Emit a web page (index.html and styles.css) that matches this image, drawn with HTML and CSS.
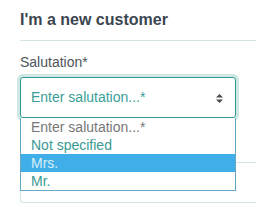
FILE: index.html
```html
<!DOCTYPE html>
<html>
<head>
<meta charset="utf-8">
<link rel="stylesheet" href="styles.css">
</head>
<body>
<div class="page">
  <h2 class="title">I'm a new customer</h2>
  <div class="divider"></div>
  <label class="label">Salutation*</label>
  <div class="select-wrap">
    <div class="select">
      <span class="select-text">Enter salutation...*</span>
      <svg class="arrows" width="7" height="9" viewBox="0 0 7 9"><path d="M3.5 0 L7 3.6 L0 3.6 Z M3.5 9 L7 5.4 L0 5.4 Z" fill="#4a4a4a"/></svg>
    </div>
    <ul class="options">
      <li class="opt placeholder">Enter salutation...*</li>
      <li class="opt">Not specified</li>
      <li class="opt active">Mrs.</li>
      <li class="opt">Mr.</li>
    </ul>
  </div>
  <div class="card"></div>
</div>
</body>
</html>
```
FILE: styles.css
```css
html, body {
  margin: 0;
  padding: 0;
  background: #ffffff;
  overflow: hidden;
}
.page {
  padding-left: 20px;
  font-family: "Liberation Sans", Arial, sans-serif;
}
.title {
  margin: 0;
  padding-top: 10px;
  font-size: 16px;
  line-height: 20px;
  font-weight: bold;
  color: #3b4650;
}
.divider {
  margin-top: 10px;
  height: 1px;
  background: #d3e6e3;
}
.label {
  display: block;
  margin-top: 13px;
  font-size: 14px;
  line-height: 17px;
  color: #4e555b;
}
.select-wrap {
  position: relative;
  margin-top: 6px;
  width: 216px;
}
.select {
  box-sizing: border-box;
  height: 41px;
  border: 1px solid #2f9b93;
  border-radius: 3px;
  box-shadow: 0 0 0 3px #d0e7e4;
  padding: 0 12px 0 10px;
  display: flex;
  align-items: center;
  justify-content: space-between;
}
.select-text {
  font-size: 14px;
  line-height: 39px;
  color: #39a098;
}
.arrows {
  display: block;
  margin-top: 1px;
}
.options {
  position: absolute;
  top: 41px;
  left: 0;
  box-sizing: border-box;
  width: 216px;
  margin: 0;
  padding: 0;
  list-style: none;
  background: #ffffff;
  border: 1px solid #68a6c6;
  border-top: none;
  z-index: 2;
}
.opt {
  height: 18px;
  line-height: 18px;
  font-size: 14px;
  padding-left: 10px;
  color: #3a9a93;
}
.opt.placeholder {
  color: #777777;
}
.opt.active {
  background: #40aee8;
  color: #d9eef7;
}
.card {
  margin-top: 44px;
  box-sizing: border-box;
  height: 41px;
  border: 1px solid #d3e6e3;
  border-right: none;
  border-radius: 3px 0 0 3px;
}
```
